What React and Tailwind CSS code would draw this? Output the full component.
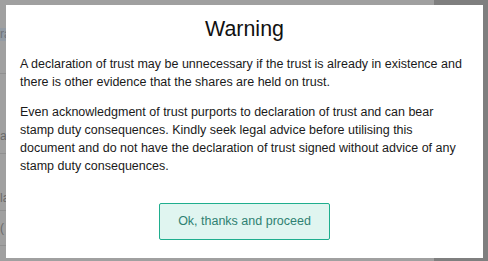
import React from "react";

const font = { fontFamily: '"Liberation Sans", Arial, sans-serif' };

function BackgroundPage() {
  return (
    <div className="flex h-full w-full">
      <div className="flex-1 bg-[#a0a0a0] pt-[28px]">
        <div className="h-[13px] w-[40px] bg-[#939ba4] text-[12px] leading-[13px] text-[#6f737a]">
          ra
        </div>
        <div className="mt-[32px] border-b border-[#909090]" />
        <div className="mt-[55px] text-[12px] leading-[14px] text-[#6a6a6a]">a</div>
        <div className="mt-[10px] border-b border-[#909090]" />
        <div className="mt-[37px] text-[12px] leading-[14px] text-[#6a6a6a]">la</div>
        <div className="mt-[5px] border-b border-[#909090]" />
        <div className="mt-[10px] text-[12px] leading-[14px] text-[#6a6a6a]">(</div>
        <div className="mt-[10px] border-b border-[#909090]" />
      </div>
      <div className="w-[54px] bg-[#7f7f7f]" />
    </div>
  );
}

export default function App() {
  return (
    <div className="relative h-[261px] w-[488px] overflow-hidden" style={font}>
      <BackgroundPage />

      {/* Modal */}
      <div className="absolute left-[6px] top-[5px] flex h-[253px] w-[477px] flex-col bg-white px-[14px] pt-[12px]">
        <h3 className="text-center text-[21.4px] leading-[24px] text-[#111]">Warning</h3>

        <div className="mt-[14px] text-[12.5px] leading-[18px] text-[#1a1a1a]">
          <p className="mb-[12px]">
            A declaration of trust may be unnecessary if the trust is already in existence and
            there is other evidence that the shares are held on trust.
          </p>
          <p>
            Even acknowledgment of trust purports to declaration of trust and can bear stamp
            duty consequences. Kindly seek legal advice before utilising this document and do
            not have the declaration of trust signed without advice of any stamp duty
            consequences.
          </p>
        </div>

        <div className="mt-auto mb-[18px] flex justify-center">
          <button className="h-[37px] w-[171px] rounded-[2px] border border-[#1fae8e] bg-[#e0f5f0] text-[12.5px] text-[#2f8172]">
            Ok, thanks and proceed
          </button>
        </div>
      </div>
    </div>
  );
}
